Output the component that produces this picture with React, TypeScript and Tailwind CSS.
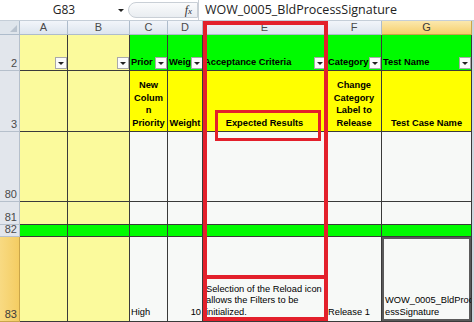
import React from 'react';

const FONT = { fontFamily: '"Liberation Sans", Arial, sans-serif' };

function FilterButton() {
  return (
    <span className="flex h-[12px] w-[12px] shrink-0 items-center justify-center border border-[#a9a9a9] bg-[#fbfbfb]">
      <span className="h-0 w-0 border-x-[3px] border-t-[3px] border-x-transparent border-t-[#222]" />
    </span>
  );
}

function ColHead({ label, active }: { label: string; active?: boolean }) {
  return (
    <div
      className={`flex items-center justify-center border-r border-b text-[11px] ${
        active
          ? 'border-[#c9a54a] bg-gradient-to-b from-[#fbe8ad] to-[#f6cf6a] text-[#3a3a3a]'
          : 'border-[#aebccc] bg-gradient-to-b from-[#f2f5fa] to-[#dde5ee] text-[#4a4a4a]'
      }`}
    >
      {label}
    </div>
  );
}

function RowHead({ label, active }: { label: string; active?: boolean }) {
  return (
    <div
      className={`flex items-end justify-end border-r border-b pr-[2px] text-[11px] leading-[13px] ${
        active
          ? 'border-[#c9a54a] bg-gradient-to-r from-[#f8da82] to-[#f4cd62] text-[#3a3a3a]'
          : 'border-[#b6c0cc] bg-[#e2e6ec] text-[#4a4a4a]'
      }`}
    >
      {label}
    </div>
  );
}

function Cell({ bg, className = '', children }: { bg: string; className?: string; children?: React.ReactNode }) {
  return <div className={`overflow-hidden border-r border-b border-[#3a3a3a] ${bg} ${className}`}>{children}</div>;
}

export default function App() {
  const pale = 'bg-[#fbfa9c]';
  const green = 'bg-[#00fb00]';
  const yellow = 'bg-[#ffff00]';
  const white = 'bg-[#f7f9f7]';

  return (
    <div className="relative h-[322px] w-[474px] overflow-hidden bg-[#cfd6de]" style={FONT}>
      {/* formula bar */}
      <div className="flex h-[21px] border-b border-[#c5ced8] bg-white">
        <div className="relative flex w-[128px] items-center justify-center text-[12px] text-[#222]" style={{ fontFamily: '"Open Sans", sans-serif' }}>
          G83
          <span className="absolute right-[4px] top-[9px] h-0 w-0 border-x-[3px] border-t-[3px] border-x-transparent border-t-[#222]" />
        </div>
        <div className="my-[2px] flex w-[70px] items-center justify-end rounded-l-full border border-[#c9cfd6] bg-gradient-to-b from-[#fafbfc] to-[#e9edf1] pr-[5px]">
          <span className="text-[12px] italic text-[#333]" style={{ fontFamily: '"Liberation Serif", serif' }}>
            f<span className="text-[9px]">x</span>
          </span>
        </div>
        <div
          className="flex flex-1 items-center border-l border-[#c9cfd6] pl-[6px] text-[12.5px] text-[#222]"
          style={{ fontFamily: '"Open Sans", sans-serif' }}
        >
          WOW_0005_BldProcessSignature
        </div>
      </div>

      {/* sheet */}
      <div className="grid w-[472px] grid-cols-[20px_48px_62px_38px_35px_124px_55px_90px] grid-rows-[14px_36px_61px_70px_23px_12px_85px]">
        {/* column headers */}
        <div className="relative border-r border-b border-[#aebccc] bg-[#dfe5ec]">
          <span className="absolute bottom-[2px] right-[2px] h-0 w-0 border-l-[7px] border-t-[7px] border-l-transparent border-t-transparent border-b-0 border-r-0" />
          <span className="absolute bottom-[2px] right-[2px] h-0 w-0 border-b-[7px] border-l-[7px] border-b-[#b9c3cf] border-l-transparent" />
        </div>
        <ColHead label="A" />
        <ColHead label="B" />
        <ColHead label="C" />
        <ColHead label="D" />
        <ColHead label="E" />
        <ColHead label="F" />
        <ColHead label="G" active />

        {/* row 2 */}
        <RowHead label="2" />
        <Cell bg={pale} className="flex items-end justify-end pb-[1px]"><FilterButton /></Cell>
        <Cell bg={pale} className="flex items-end justify-end pb-[1px]"><FilterButton /></Cell>
        {[
          ['Prior', 'C'],
          ['Weig', 'D'],
          ['Acceptance Criteria', 'E'],
          ['Category', 'F'],
          ['Test Name', 'G'],
        ].map(([t, k]) => (
          <Cell key={k} bg={green} className="flex items-end justify-between pb-[1px] pl-[1px] text-[9.3px] font-bold leading-[11px] text-black">
            <span className="whitespace-nowrap pb-[1px]">{t}</span>
            <FilterButton />
          </Cell>
        ))}

        {/* row 3 */}
        <RowHead label="3" />
        <Cell bg={pale} />
        <Cell bg={pale} />
        {[
          ['New', 'Colum', 'n', 'Priority'],
          ['Weight'],
          ['Expected Results'],
          ['Change', 'Category', 'Label to', 'Release'],
          ['Test Case Name'],
        ].map((lines, i) => (
          <Cell key={i} bg={yellow} className="flex flex-col items-center justify-end pb-[2px] text-center text-[9.3px] font-bold leading-[12.5px] text-black">
            {lines.map((l) => (
              <span key={l} className="whitespace-nowrap">{l}</span>
            ))}
          </Cell>
        ))}

        {/* row 80 */}
        <RowHead label="80" />
        <Cell bg={pale} />
        <Cell bg={pale} />
        <Cell bg={white} />
        <Cell bg={white} />
        <Cell bg={white} />
        <Cell bg={white} />
        <Cell bg={white} />

        {/* row 81 */}
        <RowHead label="81" />
        <Cell bg={pale} />
        <Cell bg={pale} />
        <Cell bg={white} />
        <Cell bg={white} />
        <Cell bg={white} />
        <Cell bg={white} />
        <Cell bg={white} />

        {/* row 82 */}
        <RowHead label="82" />
        {Array.from({ length: 7 }).map((_, i) => (
          <Cell key={i} bg={green} />
        ))}

        {/* row 83 */}
        <RowHead label="83" active />
        <Cell bg={pale} />
        <Cell bg={pale} />
        <Cell bg={white} className="flex items-end pb-[3px] pl-[1px] text-[9.3px] leading-[11px] text-black">High</Cell>
        <Cell bg={white} className="flex items-end justify-end pb-[3px] pr-[1px] text-[9.3px] leading-[11px] text-black">10</Cell>
        <Cell bg={white} className="flex flex-col justify-end pb-[3px] pl-[3px] text-[9.3px] leading-[11.5px] text-black">
          <span className="whitespace-nowrap">Selection of the Reload icon</span>
          <span className="whitespace-nowrap">allows the Filters to be</span>
          <span className="whitespace-nowrap">initialized.</span>
        </Cell>
        <Cell bg={white} className="flex items-end pb-[3px] pl-[1px] text-[9.3px] leading-[11px] text-black">Release 1</Cell>
        <Cell bg={white} className="p-0">
          <div className="flex h-full flex-col justify-end border-2 border-[#5a5a5a] pb-[1px] pl-[1px] text-[9.3px] leading-[11.5px] text-black">
            <span className="whitespace-nowrap">WOW_0005_BldProc</span>
            <span className="whitespace-nowrap">essSignature</span>
          </div>
        </Cell>
      </div>

      {/* red annotation boxes */}
      <div className="pointer-events-none absolute left-[203px] top-[21px] h-[300px] w-[125px] border-[4px] border-[#e3202b]" />
      <div className="pointer-events-none absolute left-[203px] top-[275px] h-[4px] w-[125px] bg-[#e3202b]" />
      <div className="pointer-events-none absolute left-[215px] top-[110px] h-[31px] w-[106px] border-[3px] border-[#e3202b]" />
    </div>
  );
}
